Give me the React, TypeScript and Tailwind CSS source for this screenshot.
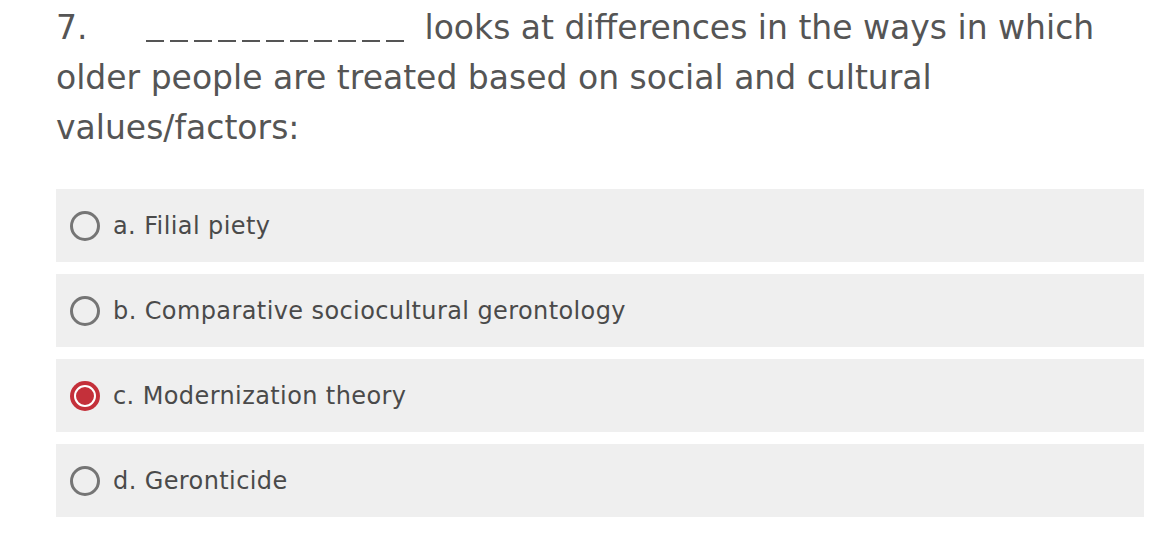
import React from 'react';

const options = [
  { key: 'a', label: 'a. Filial piety', checked: false },
  { key: 'b', label: 'b. Comparative sociocultural gerontology', checked: false },
  { key: 'c', label: 'c. Modernization theory', checked: true },
  { key: 'd', label: 'd. Geronticide', checked: false },
];

const Radio: React.FC<{ checked: boolean }> = ({ checked }) =>
  checked ? (
    <span className="w-[30px] h-[30px] rounded-full bg-[#c4303a] flex items-center justify-center shrink-0">
      <span className="w-[22px] h-[22px] rounded-full border-2 border-white bg-[#c4303a]"></span>
    </span>
  ) : (
    <span className="w-[30px] h-[30px] rounded-full border-[3px] border-[#757575] bg-transparent shrink-0"></span>
  );

export default function App() {
  return (
    <div className="w-[1168px] h-[550px] bg-white pl-[56px] pr-[24px] text-[#555]" style={{ fontFamily: '"DejaVu Sans", sans-serif' }}>
      <p className="text-[33px] leading-[50px] pt-[3px]">
        <span>7.</span>
        {/* blank to fill in */}
        <span className="inline-block ml-[58px] mr-[17px] w-[262px] h-[2px] align-[-3px] bg-[repeating-linear-gradient(90deg,#555_0_18px,transparent_18px_24px)]"></span>
        <span>looks at differences in the ways in which older people are treated based on social and cultural values/factors:</span>
      </p>
      <div className="mt-[36px] flex flex-col gap-[12px]">
        {options.map((o) => (
          <label key={o.key} className="h-[73px] bg-[#efefef] flex items-center pl-[14px] gap-[13px]">
            <Radio checked={o.checked} />
            <span className="text-[24px] text-[#4a4a4a] tracking-[0.4px]">{o.label}</span>
          </label>
        ))}
      </div>
    </div>
  );
}
